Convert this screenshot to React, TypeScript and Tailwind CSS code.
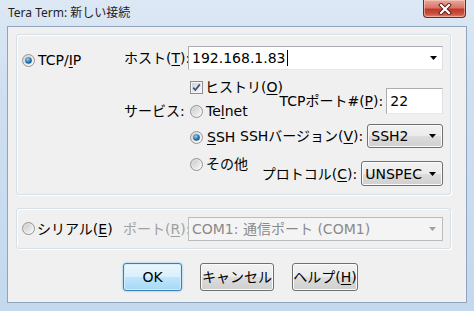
import React from "react";

const F = "font-['DejaVu_Sans','Noto_Sans_CJK_JP',sans-serif]";

function Defs() {
  return (
    <svg width="0" height="0" className="absolute">
      <defs>
        <linearGradient id="rbg" x1="0" y1="0" x2="1" y2="1">
          <stop offset="0" stopColor="#d4d4d4" />
          <stop offset="1" stopColor="#ffffff" />
        </linearGradient>
        <linearGradient id="rin" x1="0" y1="0" x2="1" y2="1">
          <stop offset="0" stopColor="#cbcbcb" />
          <stop offset="1" stopColor="#f6f6f6" />
        </linearGradient>
        <radialGradient id="rdot" cx="0.4" cy="0.35" r="0.7">
          <stop offset="0" stopColor="#a9dcf6" />
          <stop offset="0.45" stopColor="#3d86bd" />
          <stop offset="1" stopColor="#164e7c" />
        </radialGradient>
        <linearGradient id="cbg" x1="0" y1="0" x2="1" y2="1">
          <stop offset="0" stopColor="#cfd3d8" />
          <stop offset="1" stopColor="#f8f8f8" />
        </linearGradient>
      </defs>
    </svg>
  );
}

function Radio({ checked }: { checked?: boolean }) {
  return (
    <svg width="13" height="13" viewBox="0 0 13 13" className="shrink-0">
      <circle cx="6.5" cy="6.5" r="6" fill="url(#rbg)" stroke="#939393" />
      <circle cx="6.5" cy="6.5" r="4.2" fill="url(#rin)" />
      {checked && <circle cx="6.5" cy="6.5" r="3.3" fill="url(#rdot)" />}
    </svg>
  );
}

function Check() {
  return (
    <svg width="13" height="13" viewBox="0 0 13 13" className="shrink-0">
      <rect x="0.5" y="0.5" width="12" height="12" fill="#f4f4f4" stroke="#8e8f8f" />
      <rect x="2" y="2" width="9" height="9" fill="url(#cbg)" />
      <path d="M3.2 6.6 L5.4 9 L9.8 3.4" stroke="#3a4f86" strokeWidth="1.7" fill="none" />
    </svg>
  );
}

function Arrow({ gray }: { gray?: boolean }) {
  return (
    <svg width="7" height="4" viewBox="0 0 7 4" className="shrink-0">
      <path d="M0 0h7L3.5 4z" fill={gray ? "#a0a0a0" : "#000"} />
    </svg>
  );
}

function U({ children }: { children: React.ReactNode }) {
  return <span className="underline underline-offset-[2px] decoration-[1px]">{children}</span>;
}

const btnGray =
  "border border-[#707070] rounded-[3px] bg-[linear-gradient(to_bottom,#f2f2f2_0%,#ebebeb_50%,#dddddd_50%,#cfcfcf_100%)] shadow-[inset_0_0_0_1px_#fbfbfb]";
const btnBlue =
  "border border-[#3c7fb1] rounded-[3px] bg-[linear-gradient(to_bottom,#eaf6fd_0%,#d9f0fc_50%,#bee6fd_50%,#a7d9f5_100%)] shadow-[inset_0_0_0_1px_#d6eefb,0_0_2px_#62b3e8]";
const group =
  "border border-[#d5dfe5] rounded-[3px] shadow-[inset_1px_1px_0_#ffffff,1px_1px_0_#ffffff]";

export default function App() {
  return (
    <div
      className={`w-[474px] h-[311px] relative overflow-hidden bg-[linear-gradient(to_bottom,#dde8f5_0%,#cfdff0_30%,#c4d8ee_100%)] ${F} text-[14px] text-black leading-[20px]`}
    >
      <Defs />
      {/* title bar */}
      <div className="h-[26px] flex items-start">
        <div className="pl-[8px] pt-[5px] text-[12px] leading-[16px] font-['Noto_Sans','Noto_Sans_CJK_JP',sans-serif] text-[#1e1e1e]">
          Tera Term: 新しい接続
        </div>
        <div className="ml-auto mr-[8px] w-[43px] h-[18px] rounded-b-[4px] border border-t-0 border-[#6e2a22] bg-[linear-gradient(to_bottom,#e9a99b_0%,#d8766a_45%,#c0392b_55%,#c8503c_80%,#e0806a_100%)] shadow-[inset_0_0_0_1px_rgba(255,220,210,0.5)] flex items-center justify-center">
          <svg width="14" height="12" viewBox="0 0 14 12">
            <path d="M3 2 L11 10 M11 2 L3 10" stroke="#5a1a14" strokeWidth="4" strokeLinecap="square" />
            <path d="M3 2 L11 10 M11 2 L3 10" stroke="#ffffff" strokeWidth="2.2" strokeLinecap="square" />
          </svg>
        </div>
      </div>

      {/* client area */}
      <div className="mx-[7px] h-[277px] bg-[#f0f0f0] border border-[#8fa4bd] flex flex-col">
        {/* TCP/IP group */}
        <div className={`ml-[8px] mt-[7px] w-[435px] h-[161px] ${group} flex pr-[7px]`}>
          <div className="w-[107px] shrink-0 pt-[15px]">
            <div className="h-[20px] flex items-center pl-[5px] gap-[3px]">
              <Radio checked />
              <span>TCP/<U>I</U>P</span>
            </div>
          </div>
          <div className="flex-1 flex flex-col">
            <div className="mt-[11px] h-[24px] flex items-center">
              <div className="w-[64px] shrink-0 whitespace-nowrap">ホスト(<U>T</U>):</div>
              <div className="w-[255px] h-[24px] bg-white border border-[#abadb3] border-b-[#e3e9ef] border-r-[#dbdfe6] flex items-center pl-[3px] pr-[5px]">
                <span>192.168.1.83</span>
                <span className="w-px h-[16px] bg-black ml-px" />
                <span className="ml-auto"><Arrow /></span>
              </div>
            </div>
            <div className="flex">
              <div className="w-[66px] shrink-0">
                <div className="mt-[31px] h-[20px] whitespace-nowrap">サービス:</div>
              </div>
              <div className="w-[50px] shrink-0 flex flex-col whitespace-nowrap">
                <div className="mt-[7px] h-[20px] flex items-center gap-[2px]">
                  <Check />
                  <span>ヒストリ(<U>O</U>)</span>
                </div>
                <div className="mt-[4px] h-[20px] flex items-center gap-[3px]">
                  <Radio />
                  <span>Te<U>l</U>net</span>
                </div>
                <div className="mt-[6px] h-[20px] flex items-center gap-[4px]">
                  <Radio checked />
                  <span><U>S</U>SH</span>
                </div>
                <div className="mt-[7px] h-[20px] flex items-center gap-[3px]">
                  <Radio />
                  <span>その他</span>
                </div>
              </div>
              <div className="flex-1 flex flex-col items-end whitespace-nowrap">
                <div className="mt-[18px] h-[26px] flex items-center gap-[3px]">
                  <span>TCPポート#(<U>P</U>):</span>
                  <div className="w-[57px] h-[26px] bg-white border border-[#abadb3] border-b-[#e3e9ef] border-r-[#dbdfe6] flex items-center pl-[3px]">
                    22
                  </div>
                </div>
                <div className="mt-[10px] h-[24px] flex items-center gap-[4px]">
                  <span>SSHバージョン(<U>V</U>):</span>
                  <div className={`w-[76px] h-[24px] ${btnGray} flex items-center pl-[3px] pr-[6px]`}>
                    <span>SSH2</span>
                    <span className="ml-auto"><Arrow /></span>
                  </div>
                </div>
                <div className="mt-[13px] h-[25px] flex items-center gap-[4px]">
                  <span>プロトコル(<U>C</U>):</span>
                  <div className={`w-[82px] h-[25px] ${btnGray} flex items-center pl-[3px] pr-[6px]`}>
                    <span>UNSPEC</span>
                    <span className="ml-auto"><Arrow /></span>
                  </div>
                </div>
              </div>
            </div>
          </div>
        </div>

        {/* Serial group */}
        <div className={`ml-[8px] mt-[13px] w-[435px] h-[41px] ${group} flex items-center pr-[7px] whitespace-nowrap`}>
          <div className="w-[106px] shrink-0 flex items-center pl-[5px] gap-[2px]">
            <Radio />
            <span>シリアル(<U>E</U>)</span>
          </div>
          <div className="w-[65px] shrink-0 text-[#a0a0a0]">ポート(<U>R</U>):</div>
          <div className="w-[255px] h-[24px] bg-[#f4f4f4] border border-[#b9bcbf] flex items-center pl-[3px] pr-[6px] text-[#8a8a8a]">
            <span>COM1: 通信ポート (COM1)</span>
            <span className="ml-auto"><Arrow gray /></span>
          </div>
        </div>

        {/* Buttons */}
        <div className="mt-[14px] h-[28px] flex pl-[115px] gap-[18px]">
          <div className={`w-[59px] h-[28px] ${btnBlue} flex items-center justify-center`}>OK</div>
          <div className={`w-[74px] h-[28px] ${btnGray} flex items-center justify-center whitespace-nowrap`}>キャンセル</div>
          <div className={`w-[66px] h-[28px] ${btnGray} flex items-center justify-center whitespace-nowrap`}>
            <span>ヘルプ(<U>H</U>)</span>
          </div>
        </div>
      </div>
    </div>
  );
}
